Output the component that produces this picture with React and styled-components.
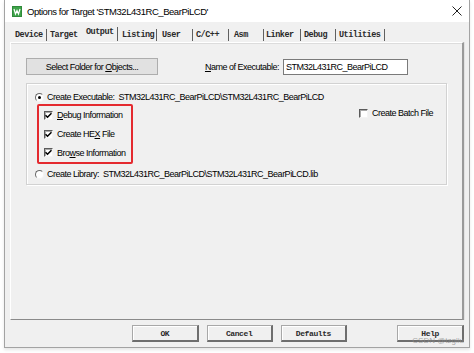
import React from "react";
import styled, { createGlobalStyle } from "styled-components";

const GlobalStyle = createGlobalStyle`
  html, body {
    margin: 0;
    padding: 0;
    background: #fff;
  }
  body {
    font-family: "Liberation Sans", Arial, sans-serif;
  }
`;

const Screen = styled.div`
  width: 474px;
  height: 353px;
  overflow: hidden;
  background: #fff;
  padding-left: 4px;
  box-sizing: border-box;
`;

const Window = styled.div`
  position: relative;
  width: 466px;
  height: 348px;
  box-sizing: border-box;
  border: 1px solid #a3a3a3;
  border-top: none;
  background: #f0f0f0;
  display: flex;
  flex-direction: column;
  box-shadow: 0 2px 3px rgba(0, 0, 0, 0.1);
`;

const TitleBar = styled.div`
  height: 22px;
  flex: none;
  background: #fff;
  display: flex;
  align-items: center;
  padding-left: 7px;
  padding-right: 7px;
`;

const Title = styled.span`
  margin-left: 5px;
  font-size: 9.5px;
  color: #000;
  letter-spacing: -0.45px;
`;

const Close = styled.svg`
  margin-left: auto;
  display: block;
`;

const Body = styled.div`
  flex: 1;
  padding: 0 5px;
  display: flex;
  flex-direction: column;
`;

const TabRow = styled.div`
  height: 20px;
  display: flex;
  align-items: flex-end;
`;

const Tab = styled.div`
  width: ${p => p.$w}px;
  height: ${p => (p.$active ? 14 : 12)}px;
  margin-bottom: 1px;
  padding-left: ${p => p.$pad}px;
  padding-top: ${p => (p.$active ? 0 : 1)}px;
  box-sizing: border-box;
  font-family: "Liberation Mono", "DejaVu Sans Mono", monospace;
  font-weight: bold;
  font-size: 8.5px;
  line-height: 10px;
  color: #2a2a2a;
  letter-spacing: -0.5px;
  border-right: 1px solid ${p => (p.$sep ? "#606060" : "transparent")};
  white-space: nowrap;
`;

const Panel = styled.div`
  height: 278px;
  box-sizing: border-box;
  border-top: 1px solid #fff;
  border-left: 1px solid #fff;
  border-right: 2px solid #9a9a9a;
  border-bottom: 1px solid #8a8a8a;
  box-shadow: inset 0 1px 0 #dcdcdc, 1px 0 0 #e2e2e2;
  padding: 15px 0 0 15px;
  font-size: 9px;
  letter-spacing: -0.5px;
  color: #000;
`;

const TopRow = styled.div`
  display: flex;
  align-items: center;
  height: 17px;
`;

const FolderButton = styled.div`
  width: 132px;
  height: 17px;
  box-sizing: border-box;
  background: #e1e1e1;
  border: 1px solid #adadad;
  display: flex;
  align-items: center;
  justify-content: center;
`;

const FieldLabel = styled.span`
  margin-left: auto;
`;

const Field = styled.div`
  margin-left: 4px;
  margin-right: 54px;
  width: 125px;
  height: 16px;
  box-sizing: border-box;
  background: #fff;
  border: 1px solid #7a7a7a;
  padding-left: 2px;
  display: flex;
  align-items: center;
`;

const GroupBox = styled.div`
  margin-top: 8px;
  width: 421px;
  height: 102px;
  box-sizing: border-box;
  border: 1px solid #d2d2d2;
  box-shadow: inset 1px 1px 0 #fff, 1px 1px 0 #fff;
  padding: 6px 0 0 8px;
`;

const OptionRow = styled.div`
  height: 14px;
  display: flex;
  align-items: center;
  margin-top: ${p => p.$mt || 0}px;
  margin-left: ${p => p.$ml || 0}px;
  white-space: pre;
`;

const MiddleRow = styled.div`
  display: flex;
  align-items: flex-start;
`;

const Highlight = styled.div`
  margin-left: 2px;
  width: 96px;
  height: 60px;
  flex: none;
  box-sizing: border-box;
  border: 2px solid #e42a2f;
  border-radius: 2px;
  padding: 0 0 0 5px;
  display: flex;
  flex-direction: column;
`;

const CheckRow = styled.div`
  height: 19px;
  display: flex;
  align-items: center;
  white-space: nowrap;
`;

const Box = styled.span`
  width: 9px;
  height: 9px;
  flex: none;
  box-sizing: border-box;
  background: #fff;
  border-top: 1px solid #5a5a5a;
  border-left: 1px solid #5a5a5a;
  border-right: 1px solid #f4f4f4;
  border-bottom: 1px solid #f4f4f4;
  box-shadow: inset 1px 1px 0 #a8a8a8;
  margin-right: ${p => p.$gap}px;
  display: flex;
  align-items: center;
  justify-content: center;
`;

const Radio = styled.span`
  width: 9px;
  height: 9px;
  flex: none;
  box-sizing: border-box;
  border-radius: 50%;
  background: #fff;
  border: 1px solid;
  border-color: #6a6a6a #f4f4f4 #f4f4f4 #6a6a6a;
  margin-right: 3px;
  display: flex;
  align-items: center;
  justify-content: center;

  &::after {
    content: "";
    width: 3px;
    height: 3px;
    border-radius: 50%;
    background: ${p => (p.$on ? "#000" : "transparent")};
  }
`;

const Footer = styled.div`
  display: flex;
  margin-top: 5px;
  padding-left: 122px;
`;

const DlgButton = styled.div`
  width: ${p => p.$w}px;
  height: 17px;
  margin-left: ${p => p.$ml}px;
  box-sizing: border-box;
  border-top: 1px solid #a8a8a8;
  border-left: 1px solid #a8a8a8;
  border-right: 2px solid #6e6e6e;
  border-bottom: 2px solid #6e6e6e;
  box-shadow: inset 1px 1px 0 #fff;
  display: flex;
  align-items: center;
  justify-content: center;
  font-family: "Liberation Mono", "DejaVu Sans Mono", monospace;
  font-weight: bold;
  font-size: 8px;
  letter-spacing: -0.4px;
  color: #2a2a2a;
`;

const Watermark = styled.span`
  position: absolute;
  right: 5px;
  bottom: 2px;
  font-size: 8px;
  color: rgba(140, 140, 140, 0.75);
`;

const tabs = [
  { name: "Device", w: 37, pad: 5, sep: true },
  { name: "Target", w: 36, pad: 3, sep: false },
  { name: "Output", w: 35, pad: 3, sep: true, active: true },
  { name: "Listing", w: 39, pad: 4, sep: true },
  { name: "User", w: 36, pad: 5, sep: true },
  { name: "C/C++", w: 36, pad: 3, sep: true },
  { name: "Asm", w: 35, pad: 5, sep: true },
  { name: "Linker", w: 37, pad: 2, sep: true },
  { name: "Debug", w: 35, pad: 3, sep: true },
  { name: "Utilities", w: 49, pad: 3, sep: true },
];

const buttons = [
  { label: "OK", w: 68, ml: 0 },
  { label: "Cancel", w: 67, ml: 8 },
  { label: "Defaults", w: 68, ml: 8 },
  { label: "Help", w: 68, ml: 50 },
];

const Tick = () => (
  <svg width="7" height="7" viewBox="0 0 7 7">
    <path d="M0.5 3.2 L2.5 5.2 L6.5 1.2" fill="none" stroke="#000" strokeWidth="1.6" />
  </svg>
);

const Check = ({ on, gap = 4, children }) => (
  <>
    <Box $gap={gap}>{on && <Tick />}</Box>
    {children}
  </>
);

const AppIcon = () => (
  <svg width="10" height="11" viewBox="0 0 10 11">
    <rect x="0" y="0" width="10" height="11" fill="#2f8a3a" />
    <rect x="1" y="1" width="8" height="9" fill="#3ea34a" />
    <path d="M2 3 L3.5 8 L5 4.5 L6.5 8 L8 3" fill="none" stroke="#fff" strokeWidth="1.2" />
  </svg>
);

export default function App() {
  return (
    <Screen>
      <GlobalStyle />
      <Window>
        <TitleBar>
          <AppIcon />
          <Title>Options for Target 'STM32L431RC_BearPiLCD'</Title>
          <Close width="10" height="10" viewBox="0 0 10 10">
            <path d="M0.5 0.5 L9.5 9.5 M9.5 0.5 L0.5 9.5" stroke="#222" strokeWidth="1" />
          </Close>
        </TitleBar>
        <Body>
          <TabRow>
            {tabs.map(t => (
              <Tab key={t.name} $w={t.w} $pad={t.pad} $sep={t.sep} $active={t.active}>
                {t.name}
              </Tab>
            ))}
          </TabRow>
          <Panel>
            <TopRow>
              <FolderButton>
                Select Folder for&nbsp;<u>O</u>bjects...
              </FolderButton>
              <FieldLabel>
                <u>N</u>ame of Executable:
              </FieldLabel>
              <Field>STM32L431RC_BearPiLCD</Field>
            </TopRow>
            <GroupBox>
              <OptionRow>
                <Radio $on />
                {"Create Executable:  STM32L431RC_BearPiLCD\\STM32L431RC_BearPiLCD"}
              </OptionRow>
              <MiddleRow>
                <Highlight>
                  <CheckRow>
                    <Check on>
                      <span>
                        <u>D</u>ebug Information
                      </span>
                    </Check>
                  </CheckRow>
                  <CheckRow>
                    <Check on>
                      <span>
                        Create HE<u>X</u> File
                      </span>
                    </Check>
                  </CheckRow>
                  <CheckRow>
                    <Check on>
                      <span>
                        Bro<u>w</u>se Information
                      </span>
                    </Check>
                  </CheckRow>
                </Highlight>
                <OptionRow $mt={2} $ml={226}>
                  <Check gap={4}>
                    <span>Create Batch File</span>
                  </Check>
                </OptionRow>
              </MiddleRow>
              <OptionRow $mt={3}>
                <Radio />
                {"Create Library:  STM32L431RC_BearPiLCD\\STM32L431RC_BearPiLCD.lib"}
              </OptionRow>
            </GroupBox>
          </Panel>
          <Footer>
            {buttons.map(b => (
              <DlgButton key={b.label} $w={b.w} $ml={b.ml}>
                {b.label}
              </DlgButton>
            ))}
          </Footer>
        </Body>
        <Watermark>CSDN @tzgliu</Watermark>
      </Window>
    </Screen>
  );
}
